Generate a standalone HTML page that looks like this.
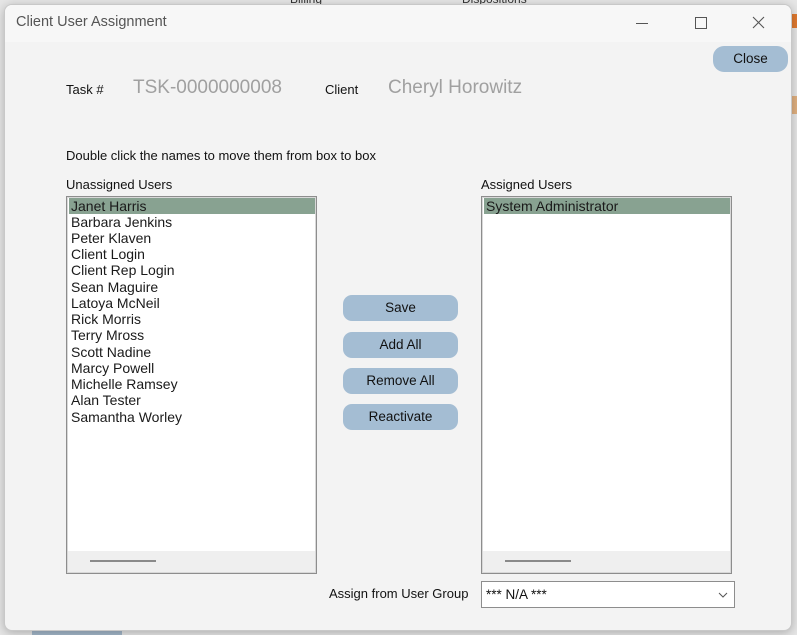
<!DOCTYPE html>
<html><head><style>
body{margin:0;width:797px;height:635px;background:#e6e6e6;position:relative;overflow:hidden;font-family:"Liberation Sans",sans-serif;}
.abs{position:absolute}
.win{left:4px;top:4px;width:786px;height:625px;background:#f3f3f3;border:1px solid #c8c8c8;border-radius:8px;box-shadow:0 2px 10px rgba(0,0,0,.25);overflow:hidden}
.title{left:0;top:0;width:786px;height:37px;background:#f7f7f7}
.lbl{font-size:13px;color:#111;white-space:nowrap}
.list{background:#fff;border:1px solid #8d8d8d;box-shadow:inset 0 0 0 1px #d8d8d8}
.item{position:absolute;left:4px;font-size:14px;color:#1a1a1a;line-height:16px;height:16px;white-space:nowrap}
.btn{position:absolute;left:338px;width:115px;height:26px;background:#a4bdd3;border-radius:9px;font-size:13.5px;text-align:center;line-height:26px;color:#111}
.sb{position:absolute;left:1px;bottom:1px;height:21px;background:#efefef}
.sb i{position:absolute;top:9px;height:2px;width:66px;background:#8a8a8a}
</style></head><body>
<div class="abs" style="left:290px;top:-8px;font-size:12px;color:#333">Billing</div>
<div class="abs" style="left:462px;top:-8px;font-size:12px;color:#333">Dispositions</div>
<div class="abs" style="left:790px;top:14px;width:7px;height:14px;background:#e07a30"></div>
<div class="abs" style="left:790px;top:96px;width:7px;height:18px;background:#e0b080"></div>
<div class="abs" style="left:32px;top:628px;width:90px;height:7px;background:#a3b7c9"></div>
<div class="abs win">
 <div class="abs title"></div>
 <div class="abs" style="left:11px;top:9px;font-size:14.5px;color:#555">Client User Assignment</div>
 <div class="abs" style="left:631px;top:18px;width:12px;height:1px;background:#555"></div>
 <div class="abs" style="left:690px;top:12px;width:10px;height:10px;border:1px solid #555"></div>
 <svg class="abs" style="left:747px;top:11px" width="13" height="13"><path d="M1 1L12 12M12 1L1 12" stroke="#555" stroke-width="1.1"/></svg>
 <div class="abs" style="left:708px;top:41px;width:75px;height:26px;background:#a4bdd3;border-radius:11px;font-size:13.5px;text-align:center;line-height:26px;color:#111">Close</div>
 <div class="abs lbl" style="left:61px;top:77px">Task #</div>
 <div class="abs" style="left:128px;top:72px;font-size:19px;color:#a0a0a0">TSK-0000000008</div>
 <div class="abs lbl" style="left:320px;top:77px">Client</div>
 <div class="abs" style="left:383px;top:72px;font-size:19px;color:#a0a0a0">Cheryl Horowitz</div>
 <div class="abs lbl" style="left:61px;top:143px">Double click the names to move them from box to box</div>
 <div class="abs lbl" style="left:61px;top:172px">Unassigned Users</div>
 <div class="abs lbl" style="left:476px;top:172px">Assigned Users</div>
 <div class="abs list" style="left:61px;top:191px;width:249px;height:376px">
  <div class="abs" style="left:2px;top:1px;width:246px;height:16px;background:#88a291"></div>
  <div class="item" style="top:1px">Janet Harris</div>
  <div class="item" style="top:17px">Barbara Jenkins</div>
  <div class="item" style="top:33px">Peter Klaven</div>
  <div class="item" style="top:49px">Client Login</div>
  <div class="item" style="top:65px">Client Rep Login</div>
  <div class="item" style="top:82px">Sean Maguire</div>
  <div class="item" style="top:98px">Latoya McNeil</div>
  <div class="item" style="top:114px">Rick Morris</div>
  <div class="item" style="top:130px">Terry Mross</div>
  <div class="item" style="top:147px">Scott Nadine</div>
  <div class="item" style="top:163px">Marcy Powell</div>
  <div class="item" style="top:179px">Michelle Ramsey</div>
  <div class="item" style="top:195px">Alan Tester</div>
  <div class="item" style="top:212px">Samantha Worley</div>
  <div class="sb" style="width:247px"><i style="left:22px"></i></div>
 </div>
 <div class="abs list" style="left:476px;top:191px;width:249px;height:376px">
  <div class="abs" style="left:2px;top:1px;width:246px;height:16px;background:#88a291"></div>
  <div class="item" style="top:1px">System Administrator</div>
  <div class="sb" style="width:247px"><i style="left:22px"></i></div>
 </div>
 <div class="btn" style="top:290px">Save</div>
 <div class="btn" style="top:327px">Add All</div>
 <div class="btn" style="top:363px">Remove All</div>
 <div class="btn" style="top:399px">Reactivate</div>
 <div class="abs lbl" style="left:324px;top:581px">Assign from User Group</div>
 <div class="abs" style="left:476px;top:576px;width:252px;height:25px;background:#fff;border:1px solid #8d8d8d">
  <div class="abs" style="left:4px;top:5px;font-size:13.5px;color:#111">*** N/A ***</div>
  <svg class="abs" style="left:236px;top:10px" width="10" height="7"><path d="M1 1L5 5L9 1" stroke="#555" fill="none"/></svg>
 </div>
</div>
</body></html>
